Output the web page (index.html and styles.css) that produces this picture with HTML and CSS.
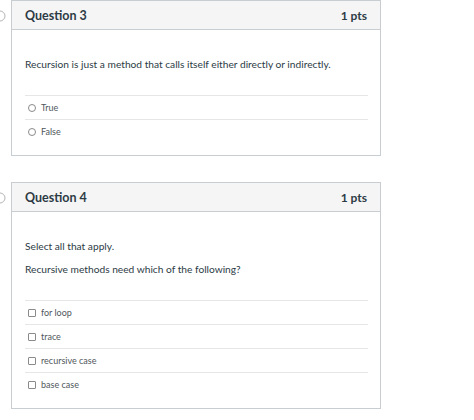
FILE: index.html
```html
<!DOCTYPE html>
<html lang="en">
<head>
    <meta charset="UTF-8">
    <title>Quiz</title>
    <link rel="stylesheet" href="styles.css">
</head>
<body>
    <div class="quiz">
        <div class="question">
            <div class="flag">
                <svg width="11" height="12" viewBox="0 0 11 12"><circle cx="0" cy="6" r="5" fill="none" stroke="#b5b5b5" stroke-width="1"/></svg>
            </div>
            <div class="card">
                <div class="card-header">
                    <span class="title">Question 3</span>
                    <span class="points">1 pts</span>
                </div>
                <div class="card-body">
                    <p class="text">Recursion is just a method that calls itself either directly or indirectly.</p>
                    <div class="answers">
                        <label class="answer"><span class="radio"></span>True</label>
                        <label class="answer"><span class="radio"></span>False</label>
                    </div>
                </div>
            </div>
        </div>

        <div class="question">
            <div class="flag">
                <svg width="11" height="12" viewBox="0 0 11 12"><circle cx="0" cy="6" r="5" fill="none" stroke="#b5b5b5" stroke-width="1"/></svg>
            </div>
            <div class="card">
                <div class="card-header">
                    <span class="title">Question 4</span>
                    <span class="points">1 pts</span>
                </div>
                <div class="card-body">
                    <p class="text">Select all that apply.</p>
                    <p class="text">Recursive methods need which of the following?</p>
                    <div class="answers">
                        <label class="answer"><span class="check"></span>for loop</label>
                        <label class="answer"><span class="check"></span>trace</label>
                        <label class="answer"><span class="check"></span>recursive case</label>
                        <label class="answer"><span class="check"></span>base case</label>
                    </div>
                </div>
            </div>
        </div>
    </div>
</body>
</html>
```

FILE: styles.css
```css
body {
    margin: 0;
    font-family: Lato, "Open Sans", sans-serif;
    color: #2d3b45;
    background: #fff;
}

.question {
    display: flex;
    align-items: flex-start;
    margin-bottom: 26px;
}

.flag {
    width: 11px;
    flex-shrink: 0;
    padding-top: 10px;
}

.flag svg {
    display: block;
}

.card {
    width: 368px;
    border: 1px solid #c7cdd1;
}

.card-header {
    display: flex;
    justify-content: space-between;
    align-items: center;
    height: 28px;
    padding: 0 12px 0 13px;
    background: #f5f5f5;
    border-bottom: 1px solid #c7cdd1;
    font-weight: bold;
    font-size: 12.5px;
}

.points {
    font-size: 12px;
    margin-right: 1px;
}

.card-body {
    padding: 26px 12px 12px 13px;
}

.text {
    margin: 0 0 7px;
    font-size: 10.2px;
    line-height: 16px;
}

.answers {
    margin-top: 23px;
}

.answer {
    display: flex;
    align-items: center;
    height: 23px;
    border-top: 1px solid #e6e6e6;
    font-size: 9px;
    color: #50575c;
}

.radio {
    width: 6px;
    height: 6px;
    border: 1px solid #8a8a8a;
    border-radius: 50%;
    margin: 0 5px 0 3px;
}

.check {
    width: 6px;
    height: 6px;
    border: 1px solid #8a8a8a;
    border-radius: 1px;
    margin: 0 5px 0 3px;
}
```
